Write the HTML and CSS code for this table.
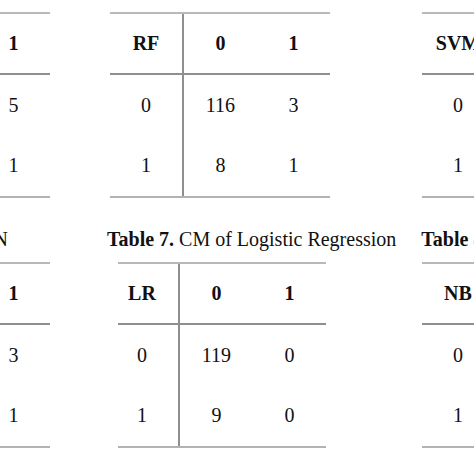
FILE: index.html
```html
<!DOCTYPE html>
<html lang="en">
<head>
<meta charset="utf-8">
<title>Confusion matrices</title>
<link rel="stylesheet" href="styles.css">
</head>
<body>
<div class="page">
  <div class="row row-top">
    <div class="cm cm-left">
      <div class="cell head label">KNN</div>
      <div class="cell head">0</div>
      <div class="cell head">1</div>
      <div class="cell label">0</div>
      <div class="cell">114</div>
      <div class="cell">5</div>
      <div class="cell label">1</div>
      <div class="cell">8</div>
      <div class="cell">1</div>
    </div>
    <div class="cm cm-mid">
      <div class="cell head label">RF</div>
      <div class="cell head">0</div>
      <div class="cell head">1</div>
      <div class="cell label">0</div>
      <div class="cell">116</div>
      <div class="cell">3</div>
      <div class="cell label">1</div>
      <div class="cell">8</div>
      <div class="cell">1</div>
    </div>
    <div class="cm cm-right-top">
      <div class="cell head label">SVM</div>
      <div class="cell head">0</div>
      <div class="cell head">1</div>
      <div class="cell label">0</div>
      <div class="cell">119</div>
      <div class="cell">0</div>
      <div class="cell label">1</div>
      <div class="cell">9</div>
      <div class="cell">0</div>
    </div>
  </div>

  <div class="captions">
    <div class="cap-left"><p class="caption"><b>Table 6.</b> CM of KNN</p></div>
    <p class="caption cap-mid"><b>Table 7.</b> CM of Logistic Regression</p>
    <p class="caption cap-right"><b>Table 8.</b> CM of Naive Bayes</p>
  </div>

  <div class="row row-bottom">
    <div class="cm cm-left">
      <div class="cell head label">ANN</div>
      <div class="cell head">0</div>
      <div class="cell head">1</div>
      <div class="cell label">0</div>
      <div class="cell">116</div>
      <div class="cell">3</div>
      <div class="cell label">1</div>
      <div class="cell">8</div>
      <div class="cell">1</div>
    </div>
    <div class="cm cm-mid-b">
      <div class="cell head label">LR</div>
      <div class="cell head">0</div>
      <div class="cell head">1</div>
      <div class="cell label">0</div>
      <div class="cell">119</div>
      <div class="cell">0</div>
      <div class="cell label">1</div>
      <div class="cell">9</div>
      <div class="cell">0</div>
    </div>
    <div class="cm cm-right-bottom">
      <div class="cell head label">NB</div>
      <div class="cell head">0</div>
      <div class="cell head">1</div>
      <div class="cell label">0</div>
      <div class="cell">110</div>
      <div class="cell">9</div>
      <div class="cell label">1</div>
      <div class="cell">7</div>
      <div class="cell">2</div>
    </div>
  </div>
</div>
</body>
</html>
```

FILE: styles.css
```css
html, body {
  margin: 0;
  padding: 0;
  background: #ffffff;
}

.page {
  width: 474px;
  height: 474px;
  overflow: hidden;
  padding-top: 12px;
  box-sizing: border-box;
  font-family: "Liberation Serif", "Times New Roman", serif;
  font-size: 20px;
  color: #111111;
}

.row {
  display: flex;
  align-items: flex-start;
}

.cm {
  flex-shrink: 0;
  display: grid;
  grid-template-columns: 74px 73px 73px;
  border-top: 2px solid #b9b9b9;
  border-bottom: 2px solid #b3b3b3;
}

.cell {
  height: 60.5px;
  display: flex;
  align-items: center;
  justify-content: center;
  white-space: nowrap;
  box-sizing: border-box;
}

.cell.head {
  height: 61px;
  font-weight: bold;
  border-bottom: 2px solid #8f8f8f;
}

.cell.label {
  border-right: 2px solid #8f8f8f;
}

/* horizontal placement of each table */
.cm-left {
  margin-left: -170px;
}

.row-top .cm-mid {
  margin-left: 60px;
}

.cm-right-top {
  margin-left: 92px;
}

.cm-mid-b {
  margin-left: 68px;
  grid-template-columns: 62px 73px 73px;
}

.cm-mid-b .label {
  padding-right: 12px;
}

.cm-right-bottom {
  margin-left: 96px;
}

/* captions */
.captions {
  display: flex;
  align-items: flex-start;
  margin-top: 29px;
  margin-bottom: 11px;
  white-space: nowrap;
}

.caption {
  margin: 0;
  line-height: 24px;
  flex-shrink: 0;
}

.cap-left {
  width: 8px;
  flex-shrink: 0;
  display: flex;
  justify-content: flex-end;
}

.cap-mid {
  margin-left: 99px;
}

.cap-right {
  margin-left: 25px;
}
```
